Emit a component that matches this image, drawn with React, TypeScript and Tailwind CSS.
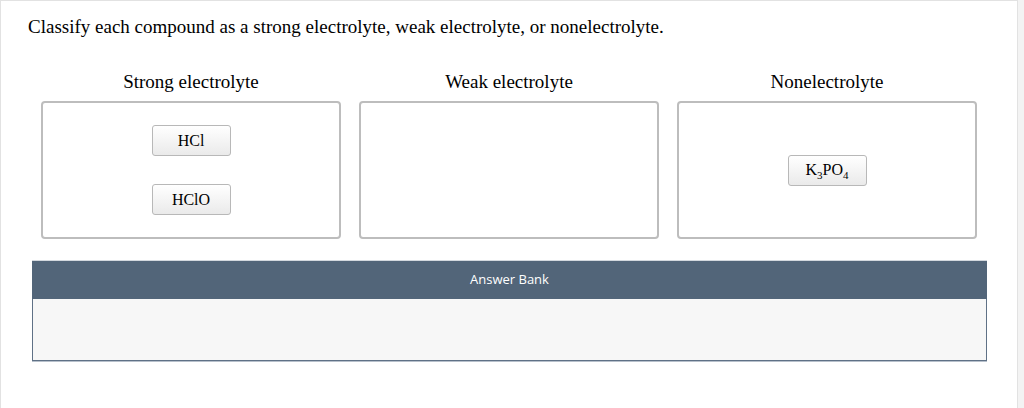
import React from "react";

const serif = "font-['Liberation_Serif','Times_New_Roman',serif]";

function Chip({ children }: { children: React.ReactNode }) {
  return (
    <div
      className={`${serif} flex h-[31px] w-[79px] items-center justify-center rounded-[3px] border border-[#b8b8b8] bg-gradient-to-b from-white to-[#eaeaea] text-[16px] leading-none text-black`}
    >
      {children}
    </div>
  );
}

function Column({ title, children }: { title: string; children?: React.ReactNode }) {
  return (
    <div className="flex flex-col items-center">
      <div className={`${serif} mb-[8px] text-[19px] leading-[22px] text-black`}>{title}</div>
      <div className="flex h-[138px] w-[300px] flex-col items-center justify-center gap-[28px] rounded-[4px] border-2 border-[#bdbdbd] bg-white">
        {children}
      </div>
    </div>
  );
}

export default function App() {
  return (
    <div className="flex h-[408px] w-[1024px] bg-[#f3f3f3]">
      <div className="h-[408px] w-[1018px] border border-b-0 border-[#e2e2e2] bg-white pt-[15px]">
        <div className={`${serif} pl-[27px] text-[19px] leading-[22px] text-black`}>
          Classify each compound as a strong electrolyte, weak electrolyte, or nonelectrolyte.
        </div>
        <div className="mt-[33px] grid w-fit grid-cols-[300px_300px_300px] gap-x-[18px] pl-[40px]">
          <Column title="Strong electrolyte">
            <Chip>HCl</Chip>
            <Chip>HClO</Chip>
          </Column>
          <Column title="Weak electrolyte" />
          <Column title="Nonelectrolyte">
            <Chip>
              <span>
                K<sub className="relative top-[4px] align-baseline text-[11px]">3</sub>PO
                <sub className="relative top-[4px] align-baseline text-[11px]">4</sub>
              </span>
            </Chip>
          </Column>
        </div>
        <div className="ml-[31px] mt-[21px] w-[955px] shadow-[0_1px_0_#b7c0cb]">
          <div className="flex h-[39px] items-center justify-center border-t border-[#d3d8de] bg-[#526579]">
            <span className="font-['Open_Sans',sans-serif] text-[13px] text-white">Answer Bank</span>
          </div>
          <div className="h-[62px] border border-t-0 border-[#5f7186] bg-[#f7f7f7]" />
        </div>
      </div>
    </div>
  );
}
